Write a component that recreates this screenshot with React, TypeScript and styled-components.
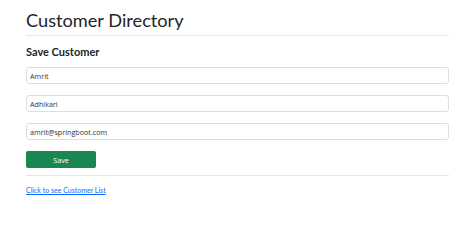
import React from "react";
import styled, { createGlobalStyle } from "styled-components";

const Global = createGlobalStyle`
  body {
    margin: 0;
    background: #fff;
    font-family: "Open Sans", "Noto Sans", sans-serif;
    color: #212529;
  }
`;

const Page = styled.div`
  width: 423px;
  padding: 5px 0 0 26px;
`;

const Title = styled.h1`
  margin: 0;
  font-family: Lato, "Open Sans", sans-serif;
  font-size: 18.2px;
  line-height: 30px;
  font-weight: 400;
`;

const Rule = styled.hr`
  margin: 0;
  border: 0;
  border-top: 1.5px solid #e6e6e6;
`;

const Subtitle = styled.h2`
  margin: 8px 0 0;
  font-family: Lato, "Open Sans", sans-serif;
  font-size: 11px;
  line-height: 16px;
  font-weight: 700;
`;

const Form = styled.form`
  display: flex;
  flex-direction: column;
  gap: 11px;
  margin-top: 7px;
`;

const Field = styled.input`
  box-sizing: border-box;
  width: 100%;
  height: 17px;
  padding: 0 3px;
  border: 1px solid #dedede;
  border-radius: 3px;
  font-family: "Open Sans", "Noto Sans", sans-serif;
  font-size: 7.2px;
  color: #333;
  background: #fff;
`;

const Button = styled.button`
  width: 70px;
  height: 17px;
  border: 0;
  border-radius: 2px;
  background: #198754;
  color: #fff;
  font-family: "Open Sans", "Noto Sans", sans-serif;
  font-size: 7.2px;
  cursor: pointer;
`;

const Footer = styled.div`
  margin-top: 7px;
`;

const ListLink = styled.a`
  display: inline-block;
  margin-top: 8px;
  font-family: Lato, "Open Sans", sans-serif;
  font-size: 7px;
  color: #0d6efd;
  text-decoration: underline;
`;

export default function App() {
  return (
    <>
      <Global />
      <Page>
        <Title>Customer Directory</Title>
        <Rule />
        <Subtitle>Save Customer</Subtitle>
        <Form onSubmit={(e) => e.preventDefault()}>
          <Field defaultValue="Amrit" />
          <Field defaultValue="Adhikari" />
          <Field defaultValue="amrit@springboot.com" />
          <Button type="submit">Save</Button>
        </Form>
        <Footer>
          <Rule />
          <ListLink href="#">Click to see Customer List</ListLink>
        </Footer>
      </Page>
    </>
  );
}
